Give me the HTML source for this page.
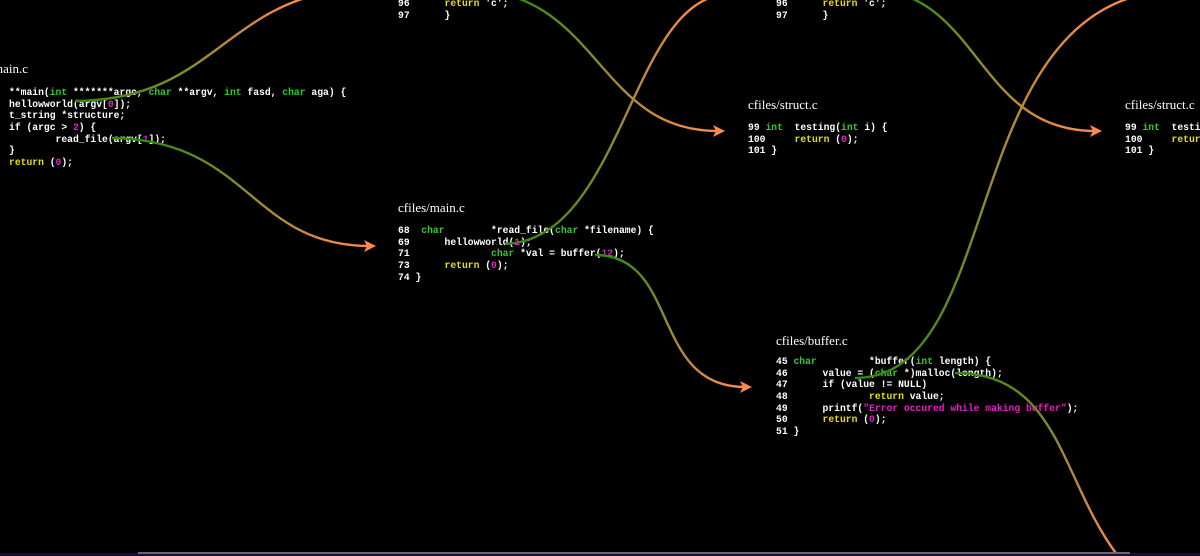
<!DOCTYPE html>
<html><head><meta charset="utf-8"><style>
html,body{margin:0;padding:0;background:#000;width:1200px;height:556px;overflow:hidden;position:relative}
#w{position:absolute;left:0;top:0;width:1200px;height:556px;overflow:hidden}
pre{position:absolute;margin:0;font-family:"Liberation Mono",monospace;font-weight:bold;font-size:9.7px;line-height:11.65px;color:#fff;white-space:pre}
.t{position:absolute;font-family:"Liberation Serif",serif;font-size:13px;color:#fff;white-space:nowrap}
.k{color:#2ecc2e}.y{color:#e8e000}.m{color:#e81cc8}
svg{position:absolute;left:0;top:0}
</style></head><body><div id="w">
<div class="t" style="left:-7px;top:61px">main.c</div>
<pre style="left:9px;top:87px">**main(<span class="k">int</span> *******argc, <span class="k">char</span> **argv, <span class="k">int</span> fasd, <span class="k">char</span> aga) {
hellowworld(argv[<span class="m">0</span>]);
t_string *structure;
if (argc &gt; <span class="m">2</span>) {
        read_file(argv[<span class="m">1</span>]);
}
<span class="y">return</span> (<span class="m">0</span>);</pre>

<pre style="left:398px;top:-2px">96      <span class="y">return</span> 'c';
97      }</pre>
<pre style="left:776px;top:-2px">96      <span class="y">return</span> 'c';
97      }</pre>

<div class="t" style="left:398px;top:200px">cfiles/main.c</div>
<pre style="left:398px;top:225px">68  <span class="k">char</span>        *read_file(<span class="k">char</span> *filename) {
69      hellowworld(<span class="m">1</span>);
71              <span class="k">char</span> *val = buffer(<span class="m">12</span>);
73      <span class="y">return</span> (<span class="m">0</span>);
74 }</pre>

<div class="t" style="left:748px;top:97px">cfiles/struct.c</div>
<pre style="left:748px;top:122px">99 <span class="k">int</span>  testing(<span class="k">int</span> i) {
100     <span class="y">return</span> (<span class="m">0</span>);
101 }</pre>
<div class="t" style="left:1125px;top:97px">cfiles/struct.c</div>
<pre style="left:1125px;top:122px">99 <span class="k">int</span>  testing(<span class="k">int</span> i) {
100     <span class="y">return</span> (<span class="m">0</span>);
101 }</pre>

<div class="t" style="left:776px;top:333px">cfiles/buffer.c</div>
<pre style="left:776px;top:356px">45 <span class="k">char</span>         *buffer(<span class="k">int</span> length) {
46      value = (<span class="k">char</span> *)malloc(length);
47      if (value != NULL)
48              <span class="y">return</span> value;
49      printf(<span class="m">"Error occured while making buffer"</span>);
50      <span class="y">return</span> (<span class="m">0</span>);
51 }</pre>

<svg width="1200" height="556" viewBox="0 0 1200 556">
<defs>
<linearGradient id="g1" gradientUnits="userSpaceOnUse" x1="75" y1="100" x2="310" y2="0"><stop offset="0" stop-color="#2f8a10"/><stop offset="1" stop-color="#ff8a50"/></linearGradient>
<linearGradient id="g2" gradientUnits="userSpaceOnUse" x1="140" y1="140" x2="370" y2="246"><stop offset="0" stop-color="#2f8a10"/><stop offset="1" stop-color="#ff8a50"/></linearGradient>
<linearGradient id="g3" gradientUnits="userSpaceOnUse" x1="510" y1="0" x2="720" y2="131"><stop offset="0" stop-color="#2f8a10"/><stop offset="1" stop-color="#ff8a50"/></linearGradient>
<linearGradient id="g4" gradientUnits="userSpaceOnUse" x1="505" y1="244" x2="715" y2="0"><stop offset="0" stop-color="#2f8a10"/><stop offset="1" stop-color="#ff8a50"/></linearGradient>
<linearGradient id="g5" gradientUnits="userSpaceOnUse" x1="600" y1="255" x2="745" y2="387"><stop offset="0" stop-color="#2f8a10"/><stop offset="1" stop-color="#ff8a50"/></linearGradient>
<linearGradient id="g6" gradientUnits="userSpaceOnUse" x1="890" y1="0" x2="1095" y2="131"><stop offset="0" stop-color="#2f8a10"/><stop offset="1" stop-color="#ff8a50"/></linearGradient>
<linearGradient id="g7" gradientUnits="userSpaceOnUse" x1="860" y1="378" x2="1140" y2="0"><stop offset="0" stop-color="#2f8a10"/><stop offset="1" stop-color="#ff8a50"/></linearGradient>
<linearGradient id="g8" gradientUnits="userSpaceOnUse" x1="955" y1="373" x2="1120" y2="556"><stop offset="0" stop-color="#2f8a10"/><stop offset="1" stop-color="#ff8a50"/></linearGradient>
</defs>
<g fill="none" stroke-width="2.4">
<path d="M75 101 C200 100 220 20 315 -5" stroke="url(#g1)"/>
<path d="M112 138 C250 140 250 246 370 246" stroke="url(#g2)"/>
<path d="M480 -10 C600 0 600 131 718 131" stroke="url(#g3)"/>
<path d="M505 244 C620 240 630 10 720 -5" stroke="url(#g4)"/>
<path d="M595 255 C680 255 650 387 745 387" stroke="url(#g5)"/>
<path d="M880 -10 C980 0 980 131 1095 131" stroke="url(#g6)"/>
<path d="M855 378 C1000 378 960 40 1140 -5" stroke="url(#g7)"/>
<path d="M955 373 C1060 373 1060 480 1118 556" stroke="url(#g8)"/>
</g>
<g fill="#ff8a50">
<path d="M725 131 L713 125 L716 131 L713 137 Z"/>
<path d="M376 246 L364 240 L367 246 L364 252 Z"/>
<path d="M752 387 L740 381 L743 387 L740 393 Z"/>
<path d="M1102 131 L1090 125 L1093 131 L1090 137 Z"/>
</g>
<rect x="0" y="553" width="1200" height="3" fill="#1a0a3a"/>
<rect x="138" y="552" width="992" height="2" fill="#666"/>
</svg>
</div></body></html>
